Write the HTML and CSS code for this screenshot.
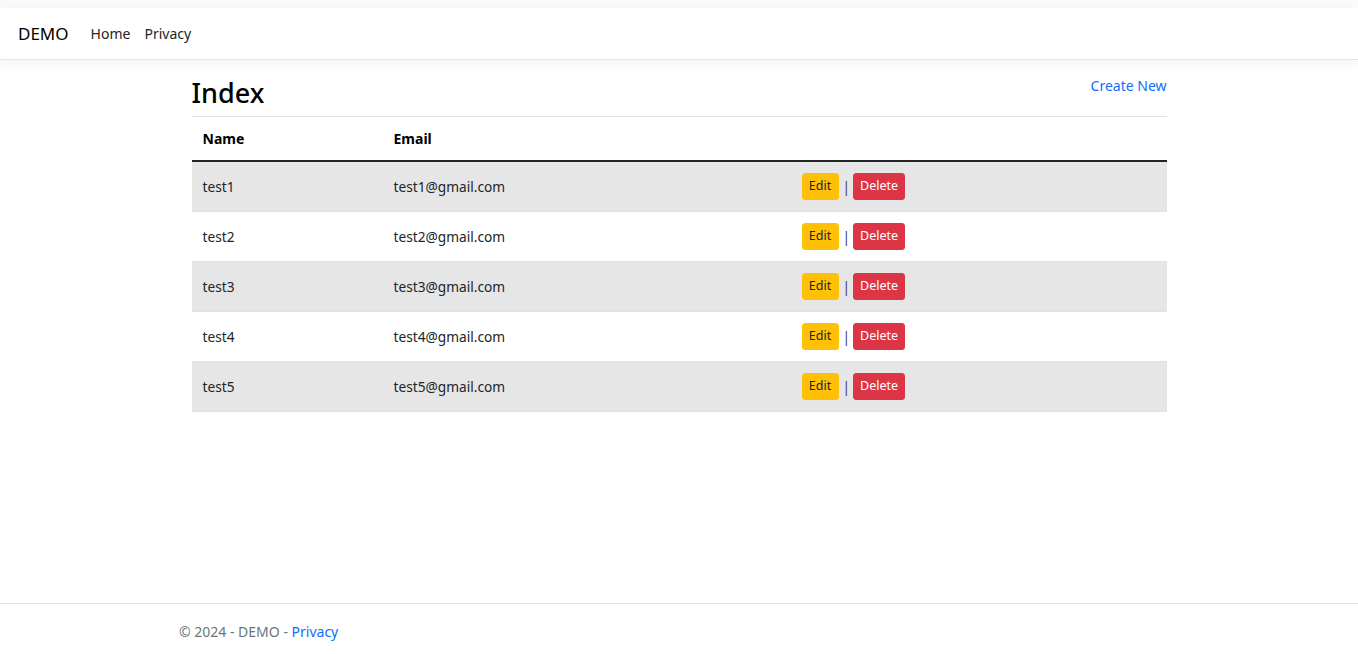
FILE: index.html
```html
<!DOCTYPE html>
<html lang="en">
<head>
<meta charset="utf-8">
<title>Index - DEMO</title>
<link rel="stylesheet" href="styles.css">
</head>
<body>
<div class="topband"></div>
<header class="navbar">
  <a class="brand" href="#">DEMO</a>
  <nav class="nav">
    <a class="nav-link" href="#">Home</a>
    <a class="nav-link" href="#">Privacy</a>
  </nav>
</header>
<main class="container">
  <div class="title-row">
    <h1 class="title">Index</h1>
    <a class="link" href="#">Create New</a>
  </div>
  <table class="table">
    <thead>
      <tr><th class="c-name">Name</th><th class="c-email">Email</th><th></th></tr>
    </thead>
    <tbody>
      <tr class="odd"><td>test1</td><td>test1@gmail.com</td><td><span class="actions"><button class="btn btn-edit">Edit</button><span class="sep">|</span><button class="btn btn-del">Delete</button></span></td></tr>
      <tr><td>test2</td><td>test2@gmail.com</td><td><span class="actions"><button class="btn btn-edit">Edit</button><span class="sep">|</span><button class="btn btn-del">Delete</button></span></td></tr>
      <tr class="odd"><td>test3</td><td>test3@gmail.com</td><td><span class="actions"><button class="btn btn-edit">Edit</button><span class="sep">|</span><button class="btn btn-del">Delete</button></span></td></tr>
      <tr><td>test4</td><td>test4@gmail.com</td><td><span class="actions"><button class="btn btn-edit">Edit</button><span class="sep">|</span><button class="btn btn-del">Delete</button></span></td></tr>
      <tr class="odd"><td>test5</td><td>test5@gmail.com</td><td><span class="actions"><button class="btn btn-edit">Edit</button><span class="sep">|</span><button class="btn btn-del">Delete</button></span></td></tr>
    </tbody>
  </table>
</main>
<footer class="footer">
  <div class="footer-inner">&copy; 2024 - DEMO - <a class="link" href="#">Privacy</a></div>
</footer>
</body>
</html>
```
FILE: styles.css
```css
html, body {
  margin: 0;
  padding: 0;
  height: 100%;
}
body {
  font-family: "Noto Sans", "Open Sans", sans-serif;
  font-size: 14px;
  color: #212529;
  background: #fff;
  position: relative;
  min-height: 654px;
}
a { text-decoration: none; }
.topband {
  height: 8px;
  background: #fafafa;
}
.navbar {
  height: 52px;
  display: flex;
  align-items: center;
  padding: 0 18px;
  background: #fff;
  border-bottom: 1px solid #e5e5e5;
  box-shadow: 0 4px 12px rgba(0,0,0,0.05);
  box-sizing: border-box;
}
.brand {
  color: #000;
  font-size: 17px;
  margin-right: 22px;
}
.nav {
  display: flex;
  gap: 14px;
}
.nav-link {
  color: #212529;
  font-size: 14px;
  padding: 0 0;
}
.container {
  width: 975px;
  margin: 0 auto;
  padding-top: 14px;
}
.title-row {
  display: flex;
  justify-content: space-between;
  align-items: flex-start;
  padding-bottom: 4px;
  border-bottom: 1px solid #dee2e6;
}
.title {
  margin: 0;
  font-size: 27px;
  font-weight: 500;
  line-height: 38px;
  color: #000;
}
.link {
  color: #0d6efd;
  font-size: 14px;
  line-height: 24px;
}
.table {
  width: 100%;
  border-collapse: collapse;
}
.table th {
  text-align: left;
  font-weight: 700;
  height: 43px;
  padding: 0 11px;
  border-bottom: 2px solid #212529;
  color: #000;
}
.c-name { width: 169px; }
.c-email { width: 386px; }
.table td {
  height: 49px;
  padding: 0 11px;
  border-bottom: 1px solid #dee2e6;
  color: #212529;
  font-size: 13.7px;
}
.table tr.odd td {
  background: #e6e6e6;
}
.actions {
  display: inline-flex;
  align-items: center;
}
.btn {
  font-family: inherit;
  font-size: 12.5px;
  height: 27px;
  border-radius: 3px;
  border: 1px solid transparent;
  cursor: pointer;
  line-height: 1;
}
.btn-edit {
  background: #ffc107;
  border-color: #ffc107;
  color: #212529;
  width: 37px;
  padding: 0;
}
.btn-del {
  background: #dc3545;
  border-color: #dc3545;
  color: #fff;
  width: 52px;
  padding: 0;
}
.sep {
  margin: 0 3px 0 4px;
  color: #3b3b6b;
}
.footer {
  position: absolute;
  left: 0;
  right: 0;
  bottom: 0;
  height: 50px;
  border-top: 1px solid #dee2e6;
  color: #6c757d;
}
.footer-inner {
  width: 1000px;
  margin: 0 auto;
  line-height: 56px;
  font-size: 14px;
}
```
